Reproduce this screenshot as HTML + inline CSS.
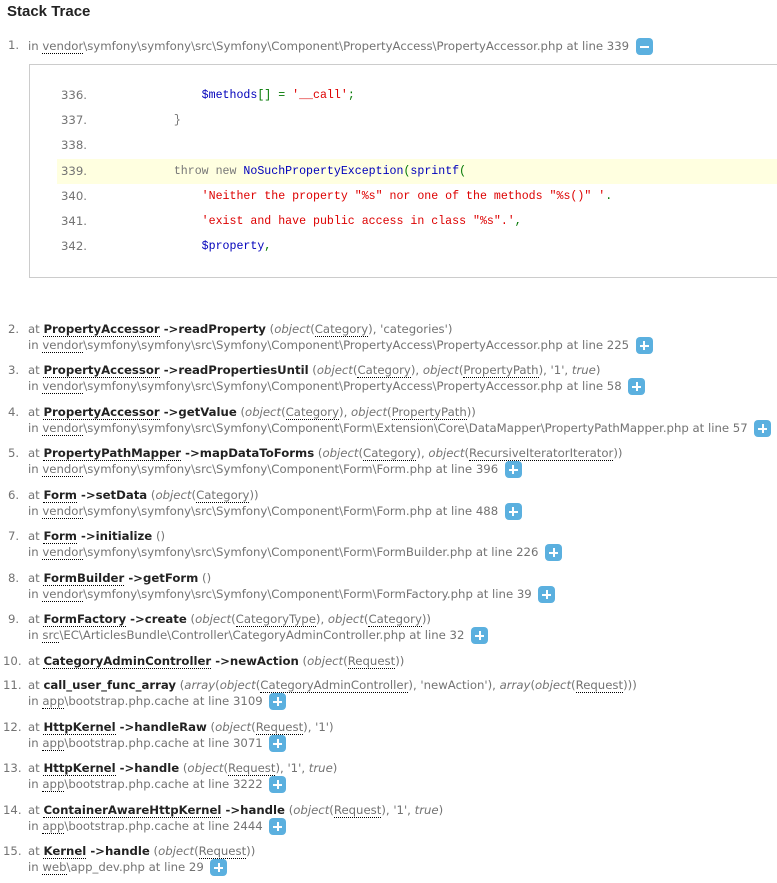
<!DOCTYPE html>
<html><head><meta charset="utf-8"><style>
body{margin:0;background:#fff;width:777px;height:883px;overflow:hidden;position:relative;font-family:"DejaVu Sans",Verdana,sans-serif;font-size:11.7px;color:#737373}
h2{position:absolute;left:7px;top:3px;margin:0;font:bold 15px "Liberation Sans",Arial,sans-serif;color:#222}
.it{position:absolute;left:0;line-height:15px;white-space:nowrap}
.n{position:absolute;text-align:right}
.t{position:absolute;left:28px}
abbr{text-decoration:none;border-bottom:1px dotted #000}
b{color:#222}
i{font-style:italic}
.pl{display:inline-block;width:17px;height:17px;background:#5bb0df;border-radius:4px;vertical-align:-5px;margin-left:3px;position:relative}
.pl:before{content:"";position:absolute;left:4px;top:7.5px;width:9px;height:2px;background:#fff}
.pl.p:after{content:"";position:absolute;left:7.5px;top:4px;width:2px;height:9px;background:#fff}
.code{position:absolute;left:29px;top:64px;width:760px;height:212px;border:1px solid #ccc;border-right:none}
.cl{position:absolute;left:0;height:25px;width:760px;font:11.6px "Liberation Mono","Courier New",monospace;line-height:25px;white-space:pre}
.cl .ln{position:absolute;left:31px;font-family:"DejaVu Sans",Verdana,sans-serif;font-size:11.7px;color:#737373}
.cl .c{position:absolute;left:116px}
.hl{background:#ffffe0;left:27px;width:733px}
.hl .ln{left:4px}.hl .c{left:89px}
.b{color:#0000bb}.r{color:#dd0000}.g{color:#007700}.k{color:#777}
</style></head><body>
<h2>Stack Trace</h2>
<div class="it" style="top:38px"><span class="n" style="left:8px">1.</span><span class="t">in <abbr>vendor</abbr>\symfony\symfony\src\Symfony\Component\PropertyAccess\PropertyAccessor.php at line 339 <span class="pl"></span></span></div>
<div class="code">
<div class="cl" style="top:18px"><span class="ln">336.</span><span class="c">        <span class="b">$methods</span><span class="g">[] = </span><span class="r">'__call'</span><span class="g">;</span></span></div>
<div class="cl" style="top:43px"><span class="ln">337.</span><span class="c">    <span class="k">}</span></span></div>
<div class="cl" style="top:68px"><span class="ln">338.</span></div>
<div class="cl hl" style="top:94px"><span class="ln">339.</span><span class="c">    <span class="k">throw new </span><span class="b">NoSuchPropertyException</span><span class="g">(</span><span class="b">sprintf</span><span class="g">(</span></span></div>
<div class="cl" style="top:119px"><span class="ln">340.</span><span class="c">        <span class="r">'Neither the property "%s" nor one of the methods "%s()" '</span><span class="g">.</span></span></div>
<div class="cl" style="top:144px"><span class="ln">341.</span><span class="c">        <span class="r">'exist and have public access in class "%s".'</span><span class="g">,</span></span></div>
<div class="cl" style="top:169px"><span class="ln">342.</span><span class="c">        <span class="b">$property</span><span class="g">,</span></span></div>
</div>

<div class="it" style="top:322px"><span class="n" style="left:8px">2.</span><span class="t">at <b><abbr>PropertyAccessor</abbr> -&gt;readProperty</b> (<i>object</i>(<abbr>Category</abbr>), 'categories')<br>in <abbr>vendor</abbr>\symfony\symfony\src\Symfony\Component\PropertyAccess\PropertyAccessor.php at line 225 <span class="pl p"></span></span></div>
<div class="it" style="top:363px"><span class="n" style="left:8px">3.</span><span class="t">at <b><abbr>PropertyAccessor</abbr> -&gt;readPropertiesUntil</b> (<i>object</i>(<abbr>Category</abbr>), <i>object</i>(<abbr>PropertyPath</abbr>), '1', <i>true</i>)<br>in <abbr>vendor</abbr>\symfony\symfony\src\Symfony\Component\PropertyAccess\PropertyAccessor.php at line 58 <span class="pl p"></span></span></div>
<div class="it" style="top:405px"><span class="n" style="left:8px">4.</span><span class="t">at <b><abbr>PropertyAccessor</abbr> -&gt;getValue</b> (<i>object</i>(<abbr>Category</abbr>), <i>object</i>(<abbr>PropertyPath</abbr>))<br>in <abbr>vendor</abbr>\symfony\symfony\src\Symfony\Component\Form\Extension\Core\DataMapper\PropertyPathMapper.php at line 57 <span class="pl p"></span></span></div>
<div class="it" style="top:446px"><span class="n" style="left:8px">5.</span><span class="t">at <b><abbr>PropertyPathMapper</abbr> -&gt;mapDataToForms</b> (<i>object</i>(<abbr>Category</abbr>), <i>object</i>(<abbr>RecursiveIteratorIterator</abbr>))<br>in <abbr>vendor</abbr>\symfony\symfony\src\Symfony\Component\Form\Form.php at line 396 <span class="pl p"></span></span></div>
<div class="it" style="top:488px"><span class="n" style="left:8px">6.</span><span class="t">at <b><abbr>Form</abbr> -&gt;setData</b> (<i>object</i>(<abbr>Category</abbr>))<br>in <abbr>vendor</abbr>\symfony\symfony\src\Symfony\Component\Form\Form.php at line 488 <span class="pl p"></span></span></div>
<div class="it" style="top:529px"><span class="n" style="left:8px">7.</span><span class="t">at <b><abbr>Form</abbr> -&gt;initialize</b> ()<br>in <abbr>vendor</abbr>\symfony\symfony\src\Symfony\Component\Form\FormBuilder.php at line 226 <span class="pl p"></span></span></div>
<div class="it" style="top:571px"><span class="n" style="left:8px">8.</span><span class="t">at <b><abbr>FormBuilder</abbr> -&gt;getForm</b> ()<br>in <abbr>vendor</abbr>\symfony\symfony\src\Symfony\Component\Form\FormFactory.php at line 39 <span class="pl p"></span></span></div>
<div class="it" style="top:612px"><span class="n" style="left:8px">9.</span><span class="t">at <b><abbr>FormFactory</abbr> -&gt;create</b> (<i>object</i>(<abbr>CategoryType</abbr>), <i>object</i>(<abbr>Category</abbr>))<br>in <abbr>src</abbr>\EC\ArticlesBundle\Controller\CategoryAdminController.php at line 32 <span class="pl p"></span></span></div>
<div class="it" style="top:654px"><span class="n" style="left:3px">10.</span><span class="t">at <b><abbr>CategoryAdminController</abbr> -&gt;newAction</b> (<i>object</i>(<abbr>Request</abbr>))</span></div>
<div class="it" style="top:678px"><span class="n" style="left:3px">11.</span><span class="t">at <b>call_user_func_array</b> (<i>array</i>(<i>object</i>(<abbr>CategoryAdminController</abbr>), 'newAction'), <i>array</i>(<i>object</i>(<abbr>Request</abbr>)))<br>in <abbr>app</abbr>\bootstrap.php.cache at line 3109 <span class="pl p"></span></span></div>
<div class="it" style="top:720px"><span class="n" style="left:3px">12.</span><span class="t">at <b><abbr>HttpKernel</abbr> -&gt;handleRaw</b> (<i>object</i>(<abbr>Request</abbr>), '1')<br>in <abbr>app</abbr>\bootstrap.php.cache at line 3071 <span class="pl p"></span></span></div>
<div class="it" style="top:761px"><span class="n" style="left:3px">13.</span><span class="t">at <b><abbr>HttpKernel</abbr> -&gt;handle</b> (<i>object</i>(<abbr>Request</abbr>), '1', <i>true</i>)<br>in <abbr>app</abbr>\bootstrap.php.cache at line 3222 <span class="pl p"></span></span></div>
<div class="it" style="top:803px"><span class="n" style="left:3px">14.</span><span class="t">at <b><abbr>ContainerAwareHttpKernel</abbr> -&gt;handle</b> (<i>object</i>(<abbr>Request</abbr>), '1', <i>true</i>)<br>in <abbr>app</abbr>\bootstrap.php.cache at line 2444 <span class="pl p"></span></span></div>
<div class="it" style="top:844px"><span class="n" style="left:3px">15.</span><span class="t">at <b><abbr>Kernel</abbr> -&gt;handle</b> (<i>object</i>(<abbr>Request</abbr>))<br>in <abbr>web</abbr>\app_dev.php at line 29 <span class="pl p"></span></span></div>
</body></html>
